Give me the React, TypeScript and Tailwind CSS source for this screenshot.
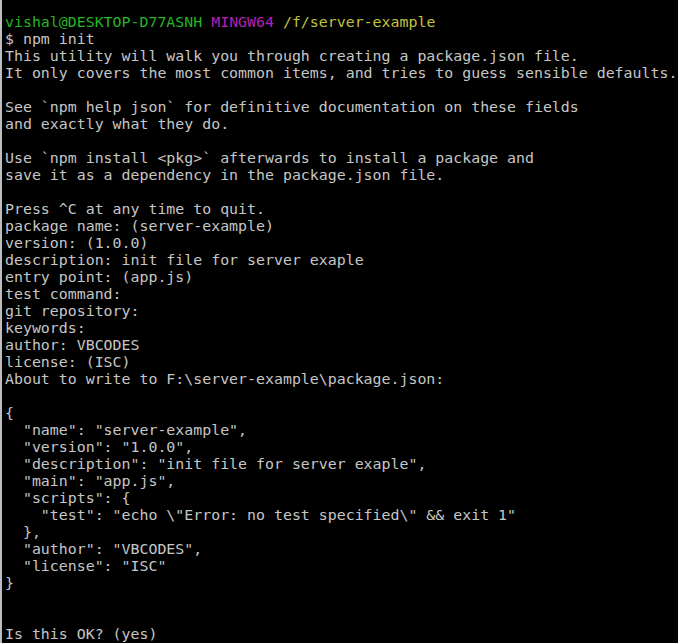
import React from "react";

const lines: string[] = [
  "__PROMPT__",
  "$ npm init",
  "This utility will walk you through creating a package.json file.",
  "It only covers the most common items, and tries to guess sensible defaults.",
  "",
  "See `npm help json` for definitive documentation on these fields",
  "and exactly what they do.",
  "",
  "Use `npm install <pkg>` afterwards to install a package and",
  "save it as a dependency in the package.json file.",
  "",
  "Press ^C at any time to quit.",
  "package name: (server-example)",
  "version: (1.0.0)",
  "description: init file for server exaple",
  "entry point: (app.js)",
  "test command:",
  "git repository:",
  "keywords:",
  "author: VBCODES",
  "license: (ISC)",
  "About to write to F:\\server-example\\package.json:",
  "",
  "{",
  '  "name": "server-example",',
  '  "version": "1.0.0",',
  '  "description": "init file for server exaple",',
  '  "main": "app.js",',
  '  "scripts": {',
  '    "test": "echo \\"Error: no test specified\\" && exit 1"',
  "  },",
  '  "author": "VBCODES",',
  '  "license": "ISC"',
  "}",
  "",
  "",
  "Is this OK? (yes)",
];

export default function App() {
  return (
    <div className="w-[678px] h-[643px] bg-[#000000] border-l-2 border-[#bdbdbd] overflow-hidden">
      <div
        className="pt-[14px] pl-[3px] text-[14.9px] leading-[17px] text-[#c6c6c6]"
        style={{ fontFamily: '"DejaVu Sans Mono", "Liberation Mono", monospace' }}
      >
        {lines.map((l, i) =>
          l === "__PROMPT__" ? (
            <div key={i} className="h-[17px] whitespace-pre">
              <span className="text-[#25b525]">vishal@DESKTOP-D77ASNH</span>{" "}
              <span className="text-[#b420b4]">MINGW64</span>{" "}
              <span className="text-[#c2c23c]">/f/server-example</span>
            </div>
          ) : (
            <div key={i} className="h-[17px] whitespace-pre">
              {l}
            </div>
          )
        )}
      </div>
    </div>
  );
}
